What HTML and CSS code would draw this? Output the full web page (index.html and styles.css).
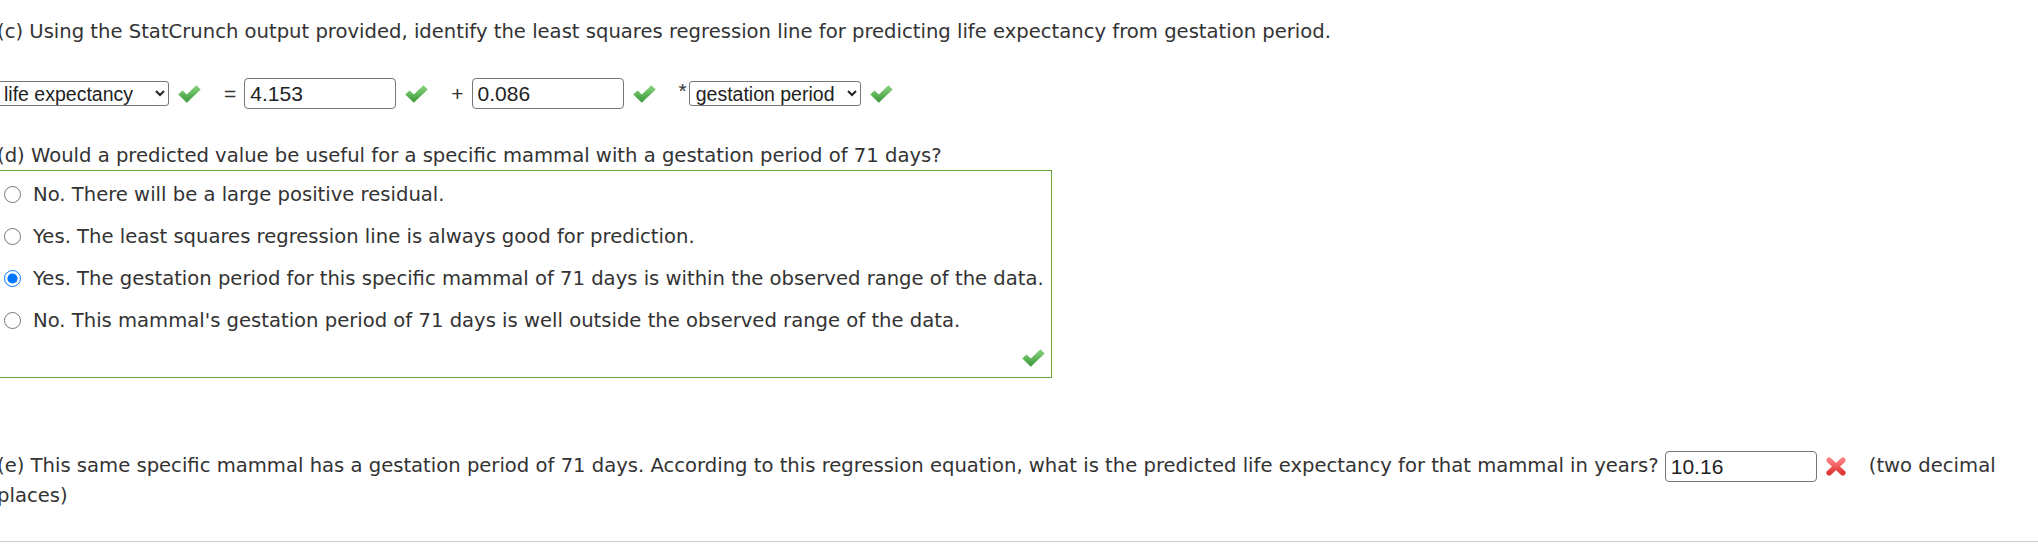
FILE: index.html
```html
<!DOCTYPE html>
<html>
<head>
<meta charset="utf-8">
<link rel="stylesheet" href="styles.css">
</head>
<body>
<div class="page">
  <p class="q q-c">(c) Using the StatCrunch output provided, identify the least squares regression line for predicting life expectancy from gestation period.</p>

  <div class="eqrow">
    <select class="sel sel-y"><option>life expectancy</option></select>
    <svg class="ok" viewBox="0 0 23 18"><defs><linearGradient id="g1" x1="0" y1="0" x2="0" y2="1"><stop offset="0" stop-color="#8ad47f"/><stop offset="1" stop-color="#3a983a"/></linearGradient></defs><path d="M0.3 9.6 L4.6 5.4 L8.8 9.6 L18.4 0.3 L22.7 4.6 L8.8 17.8 Z" fill="url(#g1)"/></svg>
    <span class="op">=</span>
    <input class="num" type="text" value="4.153">
    <svg class="ok" viewBox="0 0 23 18"><path d="M0.3 9.6 L4.6 5.4 L8.8 9.6 L18.4 0.3 L22.7 4.6 L8.8 17.8 Z" fill="url(#g1)"/></svg>
    <span class="op">+</span>
    <input class="num" type="text" value="0.086">
    <svg class="ok" viewBox="0 0 23 18"><path d="M0.3 9.6 L4.6 5.4 L8.8 9.6 L18.4 0.3 L22.7 4.6 L8.8 17.8 Z" fill="url(#g1)"/></svg>
    <span class="op star">*</span>
    <select class="sel sel-x"><option>gestation period</option></select>
    <svg class="ok" viewBox="0 0 23 18"><path d="M0.3 9.6 L4.6 5.4 L8.8 9.6 L18.4 0.3 L22.7 4.6 L8.8 17.8 Z" fill="url(#g1)"/></svg>
  </div>

  <p class="q q-d">(d) Would a predicted value be useful for a specific mammal with a gestation period of 71 days?</p>
  <div class="choices">
    <label class="choice"><input type="radio" name="d"><span>No. There will be a large positive residual.</span></label>
    <label class="choice"><input type="radio" name="d"><span>Yes. The least squares regression line is always good for prediction.</span></label>
    <label class="choice"><input type="radio" name="d" checked><span>Yes. The gestation period for this specific mammal of 71 days is within the observed range of the data.</span></label>
    <label class="choice"><input type="radio" name="d"><span>No. This mammal's gestation period of 71 days is well outside the observed range of the data.</span></label>
    <div class="choices-foot">
      <svg class="ok" viewBox="0 0 23 18"><path d="M0.3 9.6 L4.6 5.4 L8.8 9.6 L18.4 0.3 L22.7 4.6 L8.8 17.8 Z" fill="url(#g1)"/></svg>
    </div>
  </div>

  <p class="q q-e">(e) This same specific mammal has a gestation period of 71 days. According to this regression equation, what is the predicted life expectancy for that mammal in years? <input class="num num-e" type="text" value="10.16"><svg class="bad" viewBox="0 0 20 19"><defs><linearGradient id="g2" x1="0" y1="0" x2="0" y2="1"><stop offset="0" stop-color="#ff7f7f"/><stop offset="1" stop-color="#e03636"/></linearGradient></defs><path d="M3.2 3.2 L16.8 15.8 M16.8 3.2 L3.2 15.8" stroke="url(#g2)" stroke-width="5.5" stroke-linecap="round"/></svg><span class="hint">(two decimal places)</span></p>

  <hr class="rule">
</div>
</body>
</html>
```

FILE: styles.css
```css
html, body {
  margin: 0;
  padding: 0;
  background: #ffffff;
}

.page {
  margin-left: -3px;
  width: 2044px;
  font-family: "DejaVu Sans", Verdana, sans-serif;
  font-size: 19.6px;
  color: #333333;
}

.q {
  margin: 0;
  line-height: 28px;
}

.q-c {
  padding-top: 18px;
}

.eqrow {
  display: flex;
  align-items: center;
  height: 31px;
  margin-top: 32px;
}

.sel {
  height: 25px;
  width: 172px;
  font-family: "Liberation Sans", Arial, sans-serif;
  font-size: 19.5px;
  color: #222222;
  border: 1px solid #767676;
  border-radius: 3px;
  background: #ffffff;
  padding: 0 2px;
  margin: 0;
}

.ok {
  width: 23px;
  height: 18px;
  margin-left: 9px;
  flex: none;
}

.op {
  font-family: "Liberation Sans", Arial, sans-serif;
  font-size: 21px;
  margin-left: 23px;
  margin-right: 8px;
}

.star {
  margin-left: 23px;
  margin-right: 2px;
  align-self: flex-start;
  margin-top: 1px;
}

.num {
  box-sizing: border-box;
  width: 152px;
  height: 31px;
  border: 1px solid #767676;
  border-radius: 4px;
  padding: 0 5px;
  margin: 0;
  font-family: "Liberation Sans", Arial, sans-serif;
  font-size: 21px;
  color: #222222;
  background: #ffffff;
}

.q-d {
  margin-top: 33px;
}

.choices {
  box-sizing: border-box;
  width: 1065px;
  margin-left: -10px;
  border: 1px solid #67a53e;
  padding: 2px 6px 0 15px;
}

.choice {
  display: flex;
  align-items: center;
  height: 42px;
}

.choice input {
  width: 17px;
  height: 17px;
  margin: 0 12px 0 1px;
  flex: none;
}

.choices-foot {
  display: flex;
  justify-content: flex-end;
  height: 36px;
  padding-top: 8px;
  box-sizing: border-box;
}

.choices-foot .ok {
  margin-left: 0;
}

.q-e {
  margin-top: 73px;
}

.num-e {
  vertical-align: middle;
}

.bad {
  width: 20px;
  height: 19px;
  vertical-align: middle;
  margin-left: 9px;
  margin-right: 23px;
}

.rule {
  border: 0;
  border-top: 1px solid #cccccc;
  margin: 31px 0 0 0;
  height: 0;
}
```
